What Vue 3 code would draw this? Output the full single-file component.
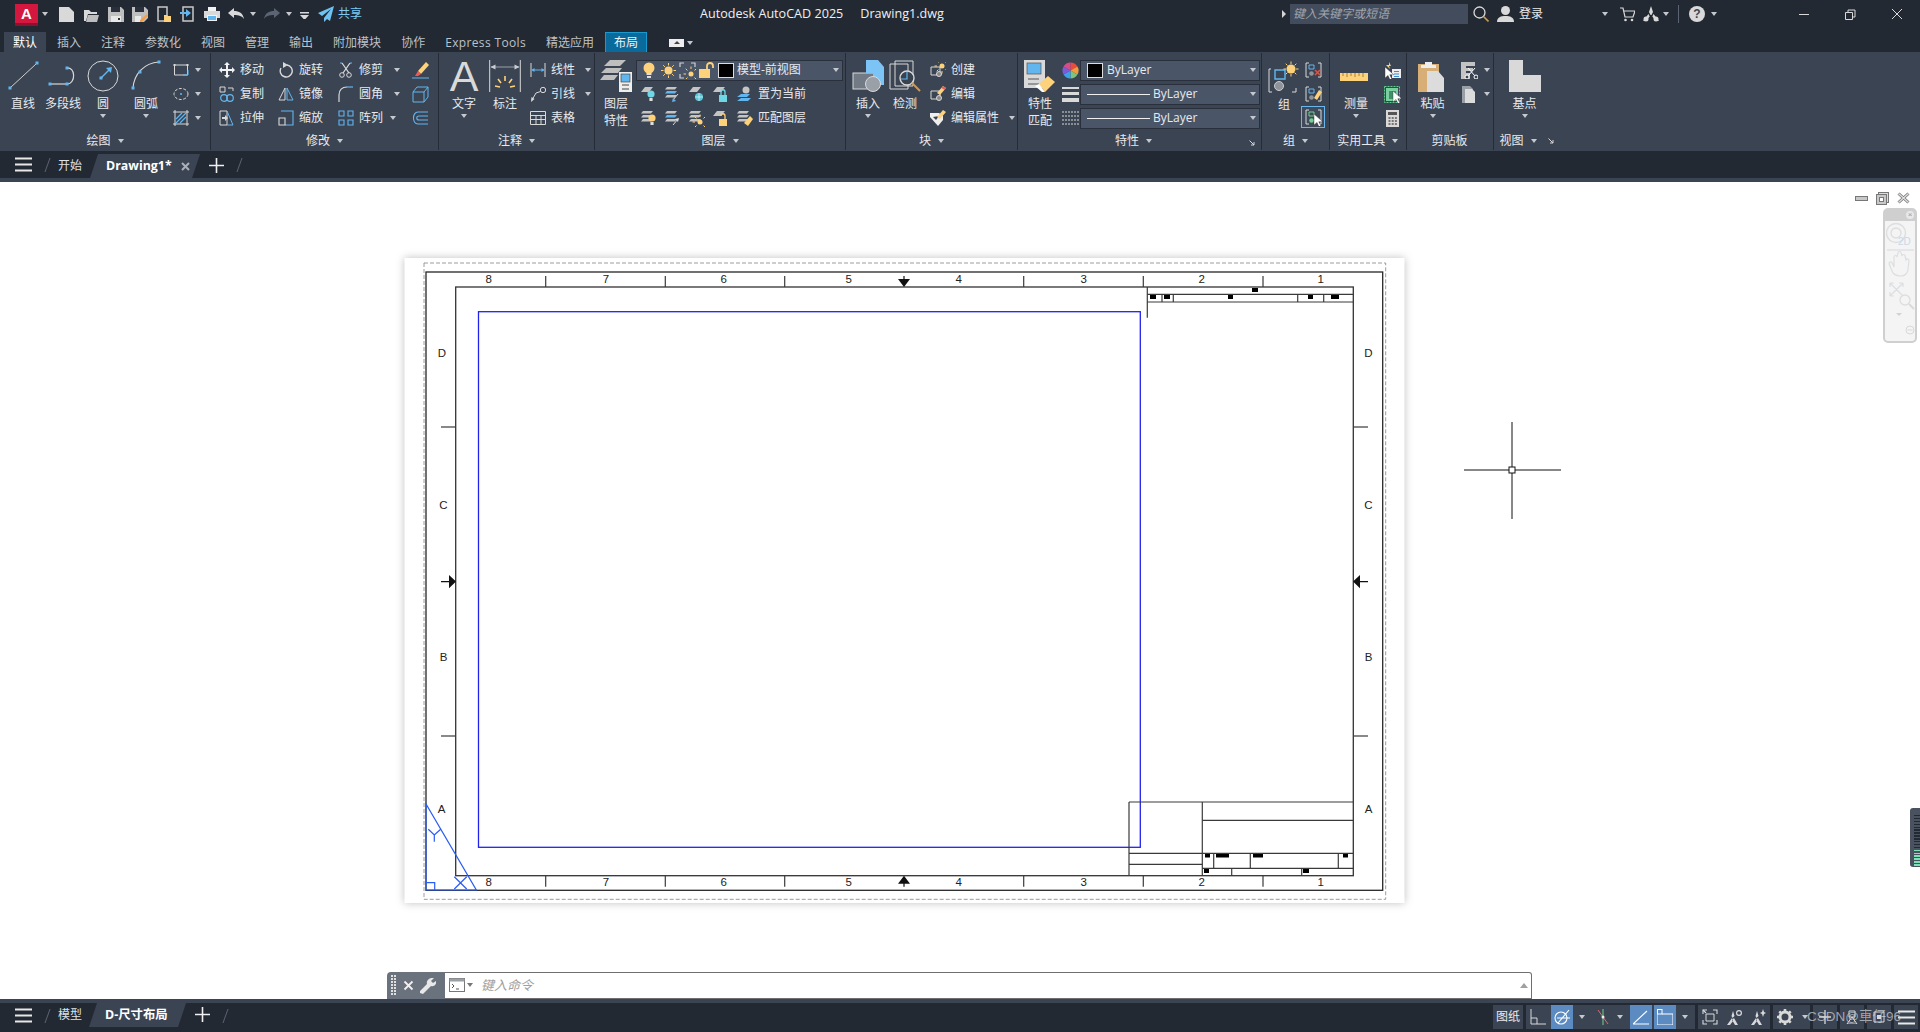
<template>
  <div class="app">
    <header class="titlebar">
      <div class="logo">A</div>
      <i class="caret caret--logo"></i>
      <div class="quick">
        <Ic n="new" w="17" />
        <Ic n="open" w="17" />
        <Ic n="save" w="16" />
        <Ic n="saveas" w="16" />
        <Ic n="publish" w="16" />
        <Ic n="mobile" w="16" />
        <Ic n="print" w="16" />
      </div>
      <Ic n="undo" w="16" class="undo" />
      <i class="caret caret--q1"></i>
      <Ic n="redo" w="16" class="redo" />
      <i class="caret caret--q2"></i>
      <Ic n="custom" w="9" class="custom" />
      <Ic n="share" w="16" class="share" />
      <span class="share-text">共享</span>
      <div class="app-title">
        <span>Autodesk AutoCAD 2025</span>
        <span>Drawing1.dwg</span>
      </div>
      <i class="tri"></i>
      <div class="search">键入关键字或短语</div>
      <Ic n="magnifier" w="16" class="mag" />
      <Ic n="user" w="17" class="user" />
      <span class="login">登录</span>
      <i class="caret caret--login"></i>
      <Ic n="cart" w="15" class="cart" />
      <Ic n="autodesk" w="16" class="adsk" />
      <i class="caret caret--adsk"></i>
      <span class="vsep"></span>
      <div class="help">?</div>
      <i class="caret caret--help"></i>
      <div class="winctl">
        <Ic n="min" w="11" />
        <Ic n="restore" w="11" />
        <Ic n="close" w="12" />
      </div>
    </header>

    <nav class="tabs">
      <span
        v-for="t in tabs"
        :key="t"
        class="tab"
        :class="{ 'tab--on': t === '默认', 'tab--latin': t === 'Express Tools' }"
      >{{ t }}</span>
      <span class="tab tab--ctx">布局</span>
      <span class="view-switch"><i></i></span>
      <i class="caret caret--view"></i>
    </nav>

    <section class="ribbon">
      <div class="panel p-draw">
        <div class="body">
          <div class="big big--40"><Ic n="line" w="33" h="32" /><span>直线</span></div>
          <div class="big big--40"><Ic n="pline" w="33" h="32" /><span>多段线</span></div>
          <div class="big big--40"><Ic n="circle" w="32" /><span>圆</span><i class="caret"></i></div>
          <div class="big big--46"><Ic n="arc" w="32" /><span>圆弧</span><i class="caret"></i></div>
          <div class="col col--draw">
            <div class="row"><Ic n="rect" w="16" /><i class="caret caret--r"></i></div>
            <div class="row"><Ic n="ellipse" w="16" /><i class="caret caret--r"></i></div>
            <div class="row"><Ic n="hatch" w="16" /><i class="caret caret--r"></i></div>
          </div>
        </div>
        <div class="ptitle">绘图<i class="caret"></i></div>
      </div>

      <div class="panel p-modify">
        <div class="body grid-modify">
          <div class="row"><Ic n="move" w="16" /><span>移动</span></div>
          <div class="row"><Ic n="rotate" w="16" /><span>旋转</span></div>
          <div class="row"><Ic n="trim" w="16" /><span>修剪</span><i class="caret caret--t"></i></div>
          <div class="row"><Ic n="pencil" w="17" /></div>
          <div class="row"><Ic n="copy" w="16" /><span>复制</span></div>
          <div class="row"><Ic n="mirror" w="16" /><span>镜像</span></div>
          <div class="row"><Ic n="fillet" w="16" /><span>圆角</span><i class="caret caret--t"></i></div>
          <div class="row"><Ic n="cube" w="17" /></div>
          <div class="row"><Ic n="stretch" w="16" /><span>拉伸</span></div>
          <div class="row"><Ic n="scale" w="16" /><span>缩放</span></div>
          <div class="row"><Ic n="array" w="16" /><span>阵列</span><i class="caret caret--a"></i></div>
          <div class="row"><Ic n="offset" w="17" /></div>
        </div>
        <div class="ptitle">修改<i class="caret"></i></div>
      </div>

      <div class="panel p-annot">
        <div class="body">
          <div class="big big--40"><b class="big-a">A</b><span>文字</span><i class="caret"></i></div>
          <div class="big big--42"><Ic n="dim" w="32" /><span>标注</span></div>
          <div class="col col--annot">
            <div class="row"><Ic n="lineardim" w="16" /><span>线性</span><i class="caret caret--s"></i></div>
            <div class="row"><Ic n="leader" w="16" /><span>引线</span><i class="caret caret--s"></i></div>
            <div class="row"><Ic n="table" w="16" /><span>表格</span></div>
          </div>
        </div>
        <div class="ptitle">注释<i class="caret"></i></div>
      </div>

      <div class="panel p-layer">
        <div class="body">
          <div class="big big--40 two"><Ic n="layers" w="32" /><span>图层<br />特性</span></div>
          <div class="col">
            <div class="row">
              <div class="combo combo--layer">
                <Ic n="bulb" w="17" /><Ic n="sun" w="17" /><Ic n="freeze" w="17" /><Ic n="lock" w="17" />
                <i class="swatch swatch--s"></i>
                <span>模型-前视图</span>
                <i class="caret caret--combo"></i>
              </div>
            </div>
            <div class="row row--l">
              <Ic n="l1" w="17" /><Ic n="l2" w="17" /><Ic n="l3" w="17" /><Ic n="l4" w="17" /><Ic n="l5" w="17" />
              <span>置为当前</span>
            </div>
            <div class="row row--l">
              <Ic n="l6" w="17" /><Ic n="l7" w="17" /><Ic n="l8" w="17" /><Ic n="l9" w="17" /><Ic n="l10" w="17" />
              <span>匹配图层</span>
            </div>
          </div>
        </div>
        <div class="ptitle">图层<i class="caret"></i></div>
      </div>

      <div class="panel p-block">
        <div class="body">
          <div class="big big--36"><Ic n="insert" w="32" /><span>插入</span><i class="caret"></i></div>
          <div class="big big--38"><Ic n="detect" w="32" /><span>检测</span></div>
          <div class="col col--block">
            <div class="row"><Ic n="bcreate" w="16" /><span>创建</span></div>
            <div class="row"><Ic n="bedit" w="16" /><span>编辑</span></div>
            <div class="row"><Ic n="battr" w="16" /><span>编辑属性</span><i class="caret caret--e"></i></div>
          </div>
        </div>
        <div class="ptitle">块<i class="caret"></i></div>
      </div>

      <div class="panel p-props">
        <div class="body">
          <div class="big big--40 two"><Ic n="match" w="32" /><span>特性<br />匹配</span></div>
          <div class="col col--pi">
            <div class="row"><Ic n="wheel" w="17" /></div>
            <div class="row"><Ic n="lweight" w="17" /></div>
            <div class="row"><Ic n="ltype" w="17" /></div>
          </div>
          <div class="col col--pc">
            <div class="row"><div class="combo combo--prop"><i class="swatch"></i><span>ByLayer</span><i class="caret caret--combo"></i></div></div>
            <div class="row"><div class="combo combo--prop"><i class="lsample"></i><span>ByLayer</span><i class="caret caret--combo"></i></div></div>
            <div class="row"><div class="combo combo--prop"><i class="lsample"></i><span>ByLayer</span><i class="caret caret--combo"></i></div></div>
          </div>
        </div>
        <div class="ptitle ptitle--launch">特性<i class="caret"></i><Ic n="launch" w="6" class="launch" /></div>
      </div>

      <div class="panel p-group">
        <div class="body">
          <div class="big big--36"><Ic n="group" w="33" /><span>组</span></div>
          <div class="col col--group">
            <div class="row"><Ic n="g1" w="17" /></div>
            <div class="row"><Ic n="g2" w="17" /></div>
            <div class="row row--sel"><Ic n="g3" w="17" /></div>
          </div>
        </div>
        <div class="ptitle">组<i class="caret"></i></div>
      </div>

      <div class="panel p-util">
        <div class="body">
          <div class="big big--40"><Ic n="ruler" w="32" /><span>测量</span><i class="caret"></i></div>
          <div class="col col--util">
            <div class="row"><Ic n="u1" w="17" /></div>
            <div class="row"><Ic n="u2" w="17" /></div>
            <div class="row"><Ic n="calc" w="17" /></div>
          </div>
        </div>
        <div class="ptitle">实用工具<i class="caret"></i></div>
      </div>

      <div class="panel p-clip">
        <div class="body">
          <div class="big big--40"><Ic n="paste" w="32" /><span>粘贴</span><i class="caret"></i></div>
          <div class="col col--clip">
            <div class="row"><Ic n="cut" w="17" /><i class="caret caret--c"></i></div>
            <div class="row"><Ic n="dup" w="17" /><i class="caret caret--c"></i></div>
          </div>
        </div>
        <div class="ptitle">剪贴板</div>
      </div>

      <div class="panel p-view">
        <div class="body">
          <div class="big big--40"><Ic n="base" w="32" /><span>基点</span><i class="caret"></i></div>
        </div>
        <div class="ptitle ptitle--left">视图<i class="caret"></i><Ic n="launch" w="6" class="launch" /></div>
      </div>
    </section>

    <div class="doctabs">
      <Ic n="burger" w="17" class="burger" />
      <i class="slash"></i>
      <span class="doc-plain">开始</span>
      <div class="doc-on doc-on--file">
        <b>Drawing1*</b>
        <Ic n="docx" w="9" />
      </div>
      <Ic n="plus" w="15" />
      <i class="slash"></i>
    </div>
    <div class="strip"></div>

    <main class="canvas">
      <svg class="sheet" width="1920" height="817" viewBox="0 182 1920 817">
        <rect class="paper" x="404.5" y="258" width="1000" height="645" />
        <rect x="424" y="263" width="961.7" height="636.3" fill="none" stroke="#9c9c9c" stroke-dasharray="4 2" />
        <rect x="426" y="272" width="956.7" height="618.3" fill="none" stroke="#262626" stroke-width="1.3" />
        <rect x="455.7" y="287" width="897.6" height="588.7" fill="none" stroke="#333" stroke-width="1.3" />
        <rect x="478.5" y="311.7" width="661.8" height="535.6" fill="none" stroke="#2222ee" stroke-width="1.3" />

        <g stroke="#3a3a3a" stroke-width="1.2">
          <line v-for="x in ticks" :key="'t' + x" :x1="x" :x2="x" y1="276" y2="287" />
          <line v-for="x in ticks" :key="'b' + x" :x1="x" :x2="x" y1="875.7" y2="886.7" />
          <line v-for="y in sideTicks" :key="'l' + y" x1="441" x2="455.7" :y1="y" :y2="y" />
          <line v-for="y in sideTicks" :key="'r' + y" x1="1353.3" x2="1368" :y1="y" :y2="y" />
          <line v-for="(l, i) in blockLines" :key="'k' + i" :x1="l[0]" :y1="l[1]" :x2="l[2]" :y2="l[3]" />
        </g>
        <rect v-for="(r, i) in blockMarks" :key="'m' + i" :x="r[0]" :y="r[1]" :width="r[2]" :height="r[3]" fill="#000" />

        <g fill="#111" stroke="none">
          <path d="M903.4 276h1.2v3H910l-6 8-6-8h5.4z" />
          <path d="M903.4 886.7h1.2v-3H910l-6-8-6 8h5.4z" />
          <path d="M441 581h8v-6l7 6.6-7 6.6v-6h-8z" />
          <path d="M1368 581h-8v-6l-7 6.6 7 6.6v-6h8z" />
        </g>

        <g class="zone">
          <text v-for="n in numbers" :key="'nt' + n.t" :x="n.x" y="283" text-anchor="middle">{{ n.t }}</text>
          <text v-for="n in numbers" :key="'nb' + n.t" :x="n.x" y="886" text-anchor="middle">{{ n.t }}</text>
          <text v-for="z in zones" :key="'zl' + z.t" :x="z.x" :y="z.y" text-anchor="middle">{{ z.t }}</text>
          <text v-for="z in zones" :key="'zr' + z.t" x="1368.5" :y="z.y" text-anchor="middle">{{ z.t }}</text>
        </g>

        <g fill="none" stroke="#2a5cf5" stroke-width="1.2">
          <path d="M426 804V890H476.3Z" />
          <path d="M426 882.7h8.7V890" />
          <path d="M428.3 829.3l6 5.7 6.4-5.7M434.3 835v6.7" />
          <path d="M454.3 876.7l12.4 12.3M466.7 876.7l-12.4 12.3" />
        </g>

        <g stroke="#111" fill="none">
          <path d="M1512 422V467M1512 473V519M1464 470H1509M1515 470H1561" />
          <rect x="1509" y="467" width="6" height="6" />
        </g>
      </svg>

      <div class="vp-ctl">
        <Ic n="vmin" w="13" />
        <Ic n="vrestore" w="13" />
        <Ic n="vclose" w="13" />
      </div>

      <div class="navbar">
        <div class="navbar__head"><i>×</i></div>
        <Ic n="nav" w="30" h="119" />
      </div>

      <div class="edge-tab">
        <i v-for="n in 12" :key="n" class="edge-tab__off"></i>
        <i v-for="n in 6" :key="'g' + n" class="edge-tab__on"></i>
      </div>

      <div class="cmd">
        <div class="cmd__tools">
          <Ic n="grip" w="6" h="22" />
          <Ic n="cmdx" w="11" />
          <Ic n="wrench" w="16" />
        </div>
        <div class="cmd__input">
          <Ic n="term" w="16" h="14" />
          <i class="caret caret--cmd"></i>
          <span>键入命令</span>
          <i class="caret-up"></i>
        </div>
      </div>
    </main>

    <footer class="statusbar">
      <div class="strip"></div>
      <div class="status-row">
        <Ic n="burger" w="17" class="burger" />
        <i class="slash"></i>
        <span class="doc-plain">模型</span>
        <div class="doc-on doc-on--layout"><b>D-尺寸布局</b></div>
        <Ic n="plus" w="15" />
        <i class="slash"></i>

        <div class="sbtns">
          <div class="sgroup sgroup--paper">图纸</div>
          <div class="sgroup sgroup--a">
            <Ic n="ortho" w="16" />
            <div class="sb-on sb-on--polar"><Ic n="polar" w="16" /></div>
            <i class="caret caret--st"></i>
            <Ic n="osnap" w="16" class="osnap" />
            <i class="caret caret--st"></i>
            <div class="sb-on"><Ic n="angle" w="16" /></div>
            <div class="sb-on sb-on--gap"><Ic n="snapbox" w="16" /></div>
            <i class="caret caret--st"></i>
          </div>
          <div class="sgroup sgroup--b">
            <Ic n="zoomfit" w="16" /><Ic n="anno1" w="16" /><Ic n="anno2" w="16" />
          </div>
          <div class="sgroup sgroup--c"><Ic n="gear" w="16" /><i class="caret caret--st"></i></div>
          <div class="sgroup sgroup--d"><Ic n="cross" w="14" /></div>
          <div class="sgroup sgroup--d"><Ic n="person" w="14" /></div>
          <div class="sgroup sgroup--d"><Ic n="frame" w="14" /></div>
          <div class="sgroup sgroup--d"><Ic n="burger" w="17" /></div>
          <span class="watermark">CSDN@車仔96</span>
        </div>
      </div>
    </footer>
  </div>
</template>

<script setup>
import { h } from 'vue';

const W = '#d9d9d9';
const B = '#62b6f0';
const Y = '#fdd27a';

const sq = (x, y, c = B, s = 3) => `<rect x="${x - s / 2}" y="${y - s / 2}" width="${s}" height="${s}" fill="${c}"/>`;
const st = (d, c = W, sw = 1.2) => `<path d="${d}" fill="none" stroke="${c}" stroke-width="${sw}"/>`;
const fl = (d, c = W) => `<path d="${d}" fill="${c}"/>`;
const plate = (y = 0, c = '#c4c4c4') => fl(`M5 ${y + 1}h8l-4 5H1z`, c);
const strip = (y, c) => fl(`M3 ${y}h10l-2 2.6H1z`, c);
const stack = strip(1, '#c4c4c4') + strip(5, '#c4c4c4') + strip(9, '#c4c4c4');
const blueStack = strip(1, '#c4c4c4') + strip(5, B) + strip(9, '#c4c4c4');
const bulb = (c, x = 8, y = 6) => `<circle cx="${x}" cy="${y}" r="3.6" fill="${c}"/><rect x="${x - 1.6}" y="${y + 4}" width="3.2" height="3" fill="#ddd"/>`;
const sunRays = (x, y, c) => {
  let out = '';
  for (let i = 0; i < 8; i++) {
    const a = (i * Math.PI) / 4;
    out += `<line x1="${x + Math.cos(a) * 5}" y1="${y + Math.sin(a) * 5}" x2="${x + Math.cos(a) * 7.5}" y2="${y + Math.sin(a) * 7.5}" stroke="${c}"/>`;
  }
  return out;
};
const wedge = (i, c) => {
  const p = (a) => `${8.5 + 8 * Math.cos(a)} ${8.5 + 8 * Math.sin(a)}`;
  const a0 = ((i * 60 - 90) * Math.PI) / 180;
  const a1 = (((i + 1) * 60 - 90) * Math.PI) / 180;
  return `<path d="M8.5 8.5L${p(a0)}A8 8 0 0 1 ${p(a1)}Z" fill="${c}"/>`;
};
const cursor = (x, y, s = 1) => `<path transform="translate(${x} ${y}) scale(${s})" d="M0 0v11l3-2.6 2 4.4 1.8-.8-2-4.3h4z" fill="#fff" stroke="#333" stroke-width=".4"/>`;
const brackets = st('M4 1H1V15H4M13 1h3V15h-3', W, 1);

const icons = {
  new: fl('M1 1h10l5 5v10H1z'),
  open: fl('M1 4h5l2 2h6v2H5l-2 7H1z', W) + fl('M5 9h11l-2 7H3z', '#bdbdbd'),
  save: fl('M0 1h13l3 3v12H0z', '#bfbfbf') + fl('M3 1h9v5H3z', '#2a303b') + fl('M3 10h10v6H3z', '#e8e8e8') + fl('M10 12h2v2h-2z', '#333'),
  saveas: fl('M0 1h13l3 3v8l-4 4H0z', '#bfbfbf') + fl('M3 1h9v5H3z', '#2a303b') + fl('M3 10h6v6H3z', '#e8e8e8') + fl('M15 8l1 2-6 6-2 0 0-2z', '#f0a050'),
  publish: st('M2 1h9v14H2z', '#c8c8c8', 1.5) + fl('M8 9h3l1 1h3v6H8z', Y),
  mobile: st('M3 1h10v14H3z', '#c8c8c8', 1.5) + fl('M0 6h6V3l5 4-5 4V8H0z', B),
  print: fl('M4 1h8v4H4z', '#f2f2f2') + fl('M0 5h16v7H0z', W) + fl('M3 9h10v6H3z', '#f2f2f2') + fl('M4 10h8v4H4z', B),
  undo: fl('M0 7l6-5v3c5 0 9 2 10 8-2-3-5-4-10-4v3z', W),
  redo: fl('M16 7l-6-5v3C5 5 1 7 0 13c2-3 5-4 10-4v3z', '#5b6472'),
  custom: fl('M0 2h9v1.5H0zM0 5h9L4.5 10z', W),
  share: fl('M16 0L0 7l4 3 9-7-7 9v4l3-3 3 2z', '#6fc3f2'),
  magnifier: `<circle cx="6.5" cy="6.5" r="5.5" fill="none" stroke="${W}" stroke-width="1.3"/>` + st('M10.5 10.5l5 5', '#c79b5f', 1.6),
  user: `<circle cx="8.5" cy="4.5" r="4.5" fill="${W}"/>` + fl('M0 16c0-5 4-6 8.5-6s8.5 1 8.5 6z'),
  cart: st('M0 1h3l2 9h8l2-6H4', W, 1.2) + `<circle cx="5.5" cy="13" r="1.3" fill="${W}"/><circle cx="12" cy="13" r="1.3" fill="${W}"/>`,
  autodesk: fl('M8 0l2 6-1.5 3H7.5L6 6z') + fl('M5.5 8l1.2 2.5L3 15H0z') + fl('M10.5 8l-1.2 2.5 3.7 4.5h3z') + `<circle cx="3" cy="13" r="2.5" fill="${W}"/><circle cx="13" cy="13" r="2.5" fill="${W}"/>`,
  min: st('M0 5.5h10', W, 1),
  restore: st('M.5 3.5h7v7h-7zM3 3.5V1h7v7H8', W, 1),
  close: st('M1 1l10 10M11 1L1 11', W, 1),

  line: st('M3 28L29 4', '#cfcfcf', 1) + sq(3, 28) + sq(30, 3),
  pline: st('M4 24H20', W) + st('M19 8c10-2 10 16 1 16', W) + sq(3, 24) + sq(20, 24) + sq(20, 8),
  circle: `<circle cx="16" cy="16" r="15" fill="none" stroke="${W}"/>` + st('M14 18L23 9', B, 1.4) + fl('M25 7l-1 6-5-5z', B) + sq(14, 18),
  arc: st('M3 28C4 14 14 3 29 2', W, 1.1) + sq(3, 28) + sq(10, 12) + sq(29, 2),
  rect: st('M1.5 3h13v10h-13z', W, 1) + sq(1.5, 3, W, 2) + sq(14.5, 3, W, 2) + st('M10 13h5V8', B, 1),
  ellipse: `<ellipse cx="8" cy="8" rx="7" ry="5.5" fill="none" stroke="${W}" stroke-dasharray="3 1.5"/><circle cx="8" cy="8" r="1" fill="${B}"/>`,
  hatch: st('M2 0v16M14 0v16M0 2h16M0 14h16', W, 1) + st('M3 9L9 3M3 13L13 3M7 13l6-6', B, 1.2),
  move: fl('M8 0l3 3H9v4h4V5l3 3-3 3V9H9v4h2l-3 3-3-3h2V9H3v2L0 8l3-3v2h4V3H5z', '#f2f2f2'),
  rotate: st('M9 3a6 6 0 1 1-6 3', W, 1.4) + fl('M5 0l5 3-5 3z', W),
  trim: st('M3 0v2M13 0v2', B, 1) + st('M4 1l7 10M12 1L5 11', W, 1.3) + `<circle cx="4" cy="13" r="2.3" fill="none" stroke="${W}"/><circle cx="11" cy="13" r="2.3" fill="none" stroke="${W}"/>`,
  pencil: fl('M14 0l3 3-8 9-3-3z', Y) + fl('M6 9l3 3-3 2H3z', '#e85c5c') + st('M0 16h17', B, 1),
  copy: st('M1 1h5v5H1z', W, 1) + st('M9 2h5v3', W, 1) + `<circle cx="5" cy="12" r="3.3" fill="none" stroke="${B}" stroke-width="1.2"/><circle cx="11" cy="12" r="3.3" fill="none" stroke="${B}" stroke-width="1.2"/>`,
  mirror: st('M7 2L1 14h6z', W, 1) + st('M9 2l6 12H9z', B, 1),
  fillet: st('M1 16V9C1 4 4 1 9 1', W, 1.2) + st('M9 1h6', B, 1.2),
  cube: st('M1 6h11v10H1z', B, 1) + st('M1 6l4-5h11v10l-4 5M12 6l4-5', B, 1),
  stretch: st('M1 1h7v14H1z', W, 1) + st('M8 1l6 14H8', B, 1) + fl('M3 7h3V5l3 3-3 3V9H3z', W),
  scale: st('M3 1h12v14H7', B, 1.1) + st('M1 8h6v7H1z', W, 1.1),
  array: st('M1 1h5v5H1zM10 1h5v5h-5zM1 10h5v5H1zM10 10h5v5h-5z', B, 1.1),
  offset: st('M16 2H6C0 2 0 14 6 14h10M16 6H7C4 6 4 10 7 10h9', B, 1.1),
  dim: st('M.7 0V32M31.3 0V32', W, 1) + st('M2 7H30', '#9aa0a8', 1) + fl('M1.5 7l5-2.5v5zM30.5 7l-5-2.5v5z', '#c9ccd0') + st('M16 16v5M9 19l3 4M23 19l-3 4M6 26l5 1M26 26l-5 1', Y, 1.6),
  lineardim: st('M1 1v14M15 1v14', W, 1) + st('M2 8h12', B, 1) + fl('M1.5 8l3-2v4zM14.5 8l-3-2v4z', B),
  leader: `<circle cx="13" cy="4" r="2.7" fill="none" stroke="${W}"/>` + st('M10.5 5.5L6 7 2 14', W, 1) + fl('M1 16l.5-5 3 2z', W),
  table: st('M.5 1.5h15v13H.5zM.5 5.5h15M.5 9.5h15M6 5.5v9M11 5.5v9', W, 1),
  layers: fl('M10 0h16l-6 6H4z', '#bfbfbf') + fl('M6 8h16l-4 5H1z', '#bfbfbf') + fl('M4 15h14l-4 5H0z', '#bfbfbf') + `<rect x="19" y="12" width="13" height="20" fill="#eee"/><rect x="21" y="14" width="9" height="8" fill="${B}" stroke="#333" stroke-width=".6"/>` + st('M22 25h7M29 29h-7', '#444', 1),
  bulb: `<circle cx="8" cy="6" r="5.5" fill="${Y}"/><rect x="5.5" y="11" width="5" height="2" fill="#ddd"/><rect x="6" y="14" width="4" height="2" fill="#ddd"/>`,
  sun: `<circle cx="8.5" cy="8.5" r="4" fill="${Y}"/>` + sunRays(8.5, 8.5, Y),
  freeze: st('M5 1H1v4M12 1h4v4M1 12v4h4', '#cfd3d8', 1.2) + `<circle cx="12" cy="12" r="2.5" fill="${Y}"/>` + sunRays(12, 12, Y),
  lock: `<rect x="1" y="7" width="11" height="9" fill="${Y}"/>` + st('M9 7V4c0-4 6-4 6 0v2', Y, 1.8),
  l1: plate() + bulb('#6fd6e6', 11, 8),
  l2: blueStack + st('M14 8l-5 6', W, 1) + fl('M8 16l1-4 3 3z', B),
  l3: plate() + `<circle cx="11" cy="11" r="4" fill="#56c6d8"/>` + st('M7 11h8M11 7v8', '#fff', .6),
  l4: plate() + `<rect x="7" y="9" width="8" height="7" fill="#6fd6e6"/>` + st('M9 9V6c0-3 4-3 4 0v3', '#6fd6e6', 1.3),
  l5: `<circle cx="10" cy="4" r="3.5" fill="#c4c4c4"/>` + fl('M5 8h9l-3 3H1z', B) + fl('M5 12h10l-3 3H1z', B),
  l6: stack + bulb(Y, 12, 8),
  l7: blueStack + st('M9 15l5-6', W, 1) + fl('M15 8l-1 4-3-3z', W),
  l8: stack + `<circle cx="12" cy="12" r="2.5" fill="${Y}"/>` + sunRays(12, 12, Y),
  l9: plate() + `<rect x="7" y="9" width="8" height="7" fill="${Y}"/>` + st('M13 9V6c0-3-4-3-4 0', Y, 1.3),
  l10: stack + fl('M14 6l3 3-5 7-4-3z', Y),
  insert: `<rect x="1" y="13" width="23" height="16" fill="#727a86" stroke="${W}"/>` + fl('M14 0h12l6 7v18H21V13H14z', '#7cc4f5') + `<circle cx="21" cy="24" r="7.5" fill="#9aa0a8" stroke="${W}"/>`,
  detect: st('M6 1h18v25H6zM1 4h18v25H1z', W, 1) + `<circle cx="18" cy="18" r="7" fill="#39424f" stroke="${W}" stroke-width="1.4"/>` + st('M18 12v7h-6', B, 1.2) + st('M23 23l8 8', '#c79b5f', 2),
  bcreate: st('M1 5h9v8H1z', W, 1) + `<circle cx="9" cy="12" r="2.5" fill="#888" stroke="${W}"/><circle cx="12" cy="4" r="2.5" fill="${Y}"/>` + sunRays(12, 4, Y),
  bedit: st('M1 5h9v8H1z', W, 1) + `<circle cx="9" cy="12" r="2.5" fill="#888" stroke="${W}"/>` + fl('M13 0l3 2-6 7-3-2z', Y) + fl('M13 0l3 2-1.5 2-3-2z', '#e85c5c'),
  battr: fl('M0 3h9l4 3v4l-5 6-8-9z', '#eee') + fl('M3 7l3 3 3-4', '#39424f') + fl('M13 0l3 2-6 7-3-2z', Y),
  match: `<rect x="0" y="0" width="21" height="28" fill="${W}"/><rect x="3" y="3" width="14" height="11" fill="${B}" stroke="#555" stroke-width=".7"/>` + st('M4 19h11M4 24h11', '#555', 1.2) + fl('M15 24l9-8 7 6-10 10z', Y) + fl('M15 24l6 8-3 0-7-6z', '#fff'),
  wheel: ['#e84c3d', '#f39c3d', '#7cc47f', '#3da1e8', '#7a5cd6', '#d64c8a'].map((c, i) => wedge(i, c)).join(''),
  lweight: fl('M0 1h17v2H0z') + fl('M0 6h17v3H0z') + fl('M0 12h17v4H0z'),
  ltype: st('M0 2h17M0 6h17M0 10h17M0 14h17', W, 1).replace('/>', ' stroke-dasharray="2 1"/>'),
  launch: st('M.5 .5L5 5M5 2v3H2', W, 1),
  group: st('M3 9H1V32H4M28 28v4h-4', W, 1) + st('M7 10h10v9H7z', B, 1.4) + `<circle cx="11" cy="26" r="4.5" fill="#8f949b" stroke="#ccc"/><circle cx="23" cy="9" r="4.5" fill="${Y}"/>` + sunRays(23, 9, Y),
  g1: brackets + st('M4 3h5v4H4z', B, 1) + `<circle cx="6.5" cy="11.5" r="2.3" fill="#8f949b"/>` + st('M10 8l5 5M15 8l-5 5', '#e84c3d', 1.6),
  g2: brackets + st('M4 3h5v4H4z', B, 1) + `<circle cx="6.5" cy="11.5" r="2.3" fill="#8f949b"/>` + fl('M14 4l3 2-5 8-3-2z', Y),
  g3: brackets + st('M4 3h5v4H4z', '#6fd08c', 1) + `<circle cx="6.5" cy="11.5" r="2.3" fill="#6fd08c"/>` + cursor(9, 5),
  ruler: fl('M0 13h28v8H0z', Y) + st('M3 13v3M7 13v4M11 13v3M15 13v4M19 13v3M23 13v4', '#8a6a2e', .8),
  u1: fl('M5 0l2 4h-2l1 3-4-4h3z', Y) + `<rect x="8" y="7" width="9" height="9" fill="#eee"/>` + st('M10 9.5h5M10 12h5M10 14.5h5', '#3d8bd0', 1) + cursor(1, 5),
  u2: `<rect x="2" y="2" width="12" height="13" fill="#7ad0a0"/><rect x="0.5" y="0.5" width="15" height="16" fill="none" stroke="#5bd08a" stroke-dasharray="2 1"/><rect x="5" y="5" width="7" height="8" fill="#3f8f68"/>` + cursor(9, 5),
  calc: `<rect x="2" y="0" width="13" height="17" fill="${W}"/><rect x="4" y="2" width="9" height="3" fill="#555"/>` + st('M4.5 8h2M7.7 8h2M10.9 8h2M4.5 11h2M7.7 11h2M10.9 11h2M4.5 14h2M7.7 14h2M10.9 14h2', '#555', 1.5),
  paste: fl('M1 4h21v20h-7V32H1z', '#d6ae76') + fl('M8 2h7v3h4v3H4V5h4z', '#eee') + fl('M10 11h11l6 7v14H10z', '#dcdcdc'),
  cut: fl('M0 0h14v4H5v2h7v3H5v2h4v6H0z', '#c4c4c4') + st('M7 6l7 8M14 6l-7 8', '#fff', 1) + `<circle cx="6" cy="15" r="2" fill="#39424f" stroke="#fff"/><circle cx="15" cy="15" r="2" fill="#39424f" stroke="#fff"/>`,
  dup: fl('M1 0h8l3 3v14H1z', '#9a9ea5') + fl('M4 3h7l3 3v11H4z', '#dcdcdc'),
  base: fl('M0 0h14v15h18v17H0z', '#d9d9d9'),

  burger: st('M0 2.5h17M0 8.5h17M0 14.5h17', '#e8e8e8', 2),
  docx: st('M1 1l7 7M8 1L1 8', '#aab0b8', 2),
  plus: st('M7.5 0v15M0 7.5h15', '#f0f0f0', 1.6),

  vmin: `<rect x="0.5" y="4.5" width="12" height="4" fill="#c8c8c8" stroke="#777"/>`,
  vrestore: `<rect x="2.5" y="0.5" width="10" height="10" fill="#ddd" stroke="#777"/><rect x="0.5" y="2.5" width="10" height="10" fill="#c8c8c8" stroke="#777"/><rect x="3.5" y="5.5" width="4" height="4" fill="#fff" stroke="#777"/>`,
  vclose: st('M1.5 1.5l10 9M11.5 1.5l-10 9', '#777', 3) + st('M1.5 1.5l10 9M11.5 1.5l-10 9', '#ddd', 1.4),
  nav: `<circle cx="10" cy="12" r="9.5" fill="none" stroke="#dcdee0" stroke-width="1.4"/><circle cx="10" cy="12" r="5" fill="none" stroke="#dcdee0" stroke-width="1.4"/><text x="12" y="24" font-size="10" font-family="Liberation Sans, sans-serif" fill="#c8d8ea">2D</text>` +
    st('M1 29H28', '#d6d8da', 1) +
    `<g transform="translate(1 2)">` + st('M6 50c-3-7-5-10-3-11s3 3 4 5l0-10c0-2 3-2 3 0l1-4c0-2 3-2 3 0l1 3c0-2 3-2 3 0l1 4c1-2 3-1 3 1l-1 8c0 4-3 7-7 7s-6-1-8-3z', '#dcdee0', 1.2) + `</g>` +
    `<g transform="translate(1 1)">` + st('M3 61L16 74M16 61L3 74M3 61h4M3 61v4M16 61h-4M16 61v4M3 74h4M3 74v-4', '#dcdee0', 1.2) +
    `<circle cx="18" cy="78" r="5" fill="#f4f4f4" stroke="#dcdee0" stroke-width="1.4"/>` + st('M22 82l5 5', '#d8dadc', 2) + `</g>` +
    fl('M10 92h6l-3 3z', '#d0d2d4') +
    `<circle cx="24" cy="109" r="4" fill="none" stroke="#d6d8da"/>` + st('M21.5 109h5', '#d6d8da', 1),
  grip: [0, 1, 2, 3, 4, 5, 6].map((r) => `<rect x="0" y="${r * 3}" width="2" height="2" fill="#e0e0e0"/><rect x="3" y="${r * 3}" width="2" height="2" fill="#e0e0e0"/>`).join(''),
  cmdx: st('M1.5 1.5l8 8M9.5 1.5l-8 8', '#f0f0f0', 1.8),
  wrench: fl('M14 0l-3 3 2 2 3-2c1 3-2 6-5 5L3 16l-3-1v-2l7-7c-1-3 2-6 5-6z', '#e8e8e8'),
  term: `<rect x=".5" y=".5" width="15" height="13" fill="#fff" stroke="#777"/><rect x=".5" y=".5" width="15" height="3" fill="#9a9ea5"/>` + st('M3 6l2 2-2 2M7 11h3', '#555', 1),

  ortho: st('M1 0V15H16M1 9h6v6', W, 1),
  polar: `<circle cx="7" cy="9" r="6" fill="none" stroke="#fff" stroke-width="1.1"/>` + st('M3 9h13M4 14L15 1', '#fff', 1.1),
  osnap: st('M3 1l10 14', '#e06a6a', 1) + st('M8 0v16', '#6fd08c', 1) + `<circle cx="8" cy="8" r="1.5" fill="#eee"/>`,
  angle: st('M0 15h16M0 15L14 2', '#fff', 1.1),
  snapbox: st('M5 5h11v11H0V5', '#fff', 1.1) + `<rect x=".5" y=".5" width="4.5" height="4.5" fill="#5b8bc0" stroke="#fff"/>`,
  zoomfit: st('M1 5V1h4M11 1h4v4M15 11v4h-4M5 15H1v-4', W, 1.1) + st('M4 5h8v7H4z', W, 1) + st('M1 1l3 3', W, 1.1),
  anno1: fl('M7 2l1.5 5-2 2-1-2zM6 9l-5 7h3l3-4zM8 9l4 7h-3l-3-5z', W) + `<circle cx="13" cy="4" r="2.4" fill="none" stroke="${W}" stroke-width="1.2"/>`,
  anno2: fl('M7 2l1.5 5-2 2-1-2zM6 9l-5 7h3l3-4zM8 9l4 7h-3l-3-5z', W) + fl('M13 0l1 3 2 1-2 1-1 3-1-3-2-1 2-1z', W),
  gear: `<circle cx="8" cy="8" r="5" fill="none" stroke="${W}" stroke-width="3"/>` + st('M8 0v3M8 13v3M0 8h3M13 8h3M2.3 2.3l2 2M11.7 11.7l2 2M13.7 2.3l-2 2M4.3 11.7l-2 2', W, 2.6),
  cross: st('M7 0v14M1 7h12', W, 1.3),
  person: st('M4 1h6v6H4zM7 7l-5 7h10z', W, 1),
  frame: st('M2 2h10v10H2z', W, 1) + fl('M5 5h4v4H5z', W)
};

const Ic = (p) => {
  const w = Number(p.w);
  const ht = Number(p.h || p.w);
  return h('svg', { class: 'ic', width: w, height: ht, viewBox: `0 0 ${w} ${ht}`, innerHTML: icons[p.n] });
};
Ic.props = ['n', 'w', 'h'];

const tabs = ['默认', '插入', '注释', '参数化', '视图', '管理', '输出', '附加模块', '协作', 'Express Tools', '精选应用'];

const ticks = [545.7, 665.3, 784.7, 1023.7, 1143.3, 1263];
const sideTicks = [427, 736];
const numbers = [
  { t: '8', x: 488.7 },
  { t: '7', x: 606 },
  { t: '6', x: 723.7 },
  { t: '5', x: 848.7 },
  { t: '4', x: 958.7 },
  { t: '3', x: 1083.6 },
  { t: '2', x: 1201.7 },
  { t: '1', x: 1320.7 }
];
const zones = [
  { t: 'D', x: 442, y: 357 },
  { t: 'C', x: 443.5, y: 509 },
  { t: 'B', x: 443.5, y: 661 },
  { t: 'A', x: 441.5, y: 813 }
];
const blockLines = [
  [1147.3, 287, 1147.3, 317.7],
  [1147.3, 294.3, 1353.3, 294.3],
  [1147.3, 302, 1353.3, 302],
  [1162, 294.3, 1162, 302],
  [1173.3, 294.3, 1173.3, 302],
  [1297.7, 294.3, 1297.7, 302],
  [1323.7, 294.3, 1323.7, 302],
  [1129, 802, 1353.3, 802],
  [1129, 802, 1129, 875.7],
  [1202.3, 802, 1202.3, 875.7],
  [1202.3, 820.3, 1353.3, 820.3],
  [1129, 853.3, 1353.3, 853.3],
  [1129, 864.3, 1202.3, 864.3],
  [1202.3, 868.3, 1353.3, 868.3],
  [1213.7, 853.3, 1213.7, 868.3],
  [1250.3, 853.3, 1250.3, 868.3],
  [1338.3, 853.3, 1338.3, 868.3],
  [1231.7, 868.3, 1231.7, 875.7],
  [1301.7, 868.3, 1301.7, 875.7]
];
const blockMarks = [
  [1252, 288, 6, 4],
  [1150, 295, 6, 4],
  [1164, 295, 6, 4],
  [1228, 295, 5, 4],
  [1308, 295, 5, 4],
  [1331, 295, 8, 4],
  [1205, 854, 5, 3.5],
  [1216, 854, 13, 3.5],
  [1253, 854, 10, 3.5],
  [1343, 854, 5, 3.5],
  [1204, 869, 5, 4],
  [1303, 869, 6, 4]
];
</script>

<style>
html,
body {
  margin: 0;
  background: #fff;
}
</style>

<style scoped>
.app {
  width: 1920px;
  height: 1032px;
  display: flex;
  flex-direction: column;
  overflow: hidden;
  font: 12px/16px "Open Sans", "Noto Sans CJK SC", sans-serif;
  color: #e8eaed;
  background: #222933;
}

.ic {
  display: block;
  flex: none;
}

/* carets */
.caret {
  display: block;
  flex: none;
  width: 0;
  height: 0;
  border-top: 4px solid #c5c9cf;
  border-left: 3.5px solid transparent;
  border-right: 3.5px solid transparent;
}

/* title bar */
.titlebar {
  height: 32px;
  flex: none;
  box-sizing: border-box;
  display: flex;
  align-items: center;
  padding: 0 0 4px 15px;
}

.logo {
  width: 23px;
  height: 19px;
  margin-top: 1px;
  background: #d4173f;
  border-bottom: 3px solid #8c1230;
  color: #fff;
  font: 700 15px/19px "Liberation Sans", sans-serif;
  text-align: center;
}

.caret--logo {
  margin-left: 4px;
}

.quick {
  display: flex;
  gap: 8px;
  margin-left: 10px;
}

.undo {
  margin-left: 8px;
}

.caret--q1 {
  margin-left: 6px;
}

.redo {
  margin-left: 8px;
}

.caret--q2 {
  margin-left: 6px;
}

.custom {
  margin-left: 8px;
}

.share {
  margin-left: 9px;
}

.share-text {
  margin-left: 4px;
  color: #7ec8f2;
}

.app-title {
  display: flex;
  gap: 17px;
  margin-left: 338px;
  font-size: 12.6px;
  color: #f0f0f0;
}

.tri {
  margin-left: 338px;
  border-left: 4px solid #d5d5d5;
  border-top: 4px solid transparent;
  border-bottom: 4px solid transparent;
}

.search {
  width: 178px;
  height: 20px;
  margin-left: 4px;
  padding-left: 3px;
  box-sizing: border-box;
  background: #434c5c;
  color: #a0a6af;
  font-style: italic;
  line-height: 20px;
}

.mag {
  margin-left: 5px;
}

.user {
  margin-left: 8px;
}

.login {
  margin-left: 5px;
}

.caret--login {
  margin-left: 59px;
}

.cart {
  margin-left: 12px;
}

.adsk {
  margin-left: 8px;
}

.caret--adsk {
  margin-left: 4px;
}

.vsep {
  width: 1px;
  height: 18px;
  margin-left: 9px;
  background: #5b6472;
}

.help {
  width: 16px;
  height: 16px;
  margin-left: 10px;
  border-radius: 50%;
  background: #d9d9d9;
  color: #3b4453;
  font: 700 12px/16px "Liberation Sans", sans-serif;
  text-align: center;
}

.caret--help {
  margin-left: 6px;
}

.winctl {
  display: flex;
  align-items: center;
  margin-left: 82px;
  gap: 35px;
}

/* ribbon tabs */
.tabs {
  height: 20px;
  flex: none;
  display: flex;
  align-items: stretch;
  padding-left: 4px;
}

.tab {
  padding: 0 10px;
  line-height: 21px;
  color: #bcc2ca;
}

.tab--on {
  background: #3b4453;
  color: #fff;
  padding: 0 9px;
  margin-right: 1px;
}

.tab--latin {
  letter-spacing: 0.35px;
}

.tab--ctx {
  width: 42px;
  box-sizing: border-box;
  margin-left: 1px;
  padding: 0;
  text-align: center;
  color: #f0f0f0;
  background: #0b6a9c;
  border: 1px solid #1899d0;
  border-bottom: 0;
  line-height: 20px;
}

.view-switch {
  width: 15px;
  height: 8px;
  margin: 7px 0 0 22px;
  background: #eee;
  position: relative;
}

.view-switch i {
  position: absolute;
  left: 5px;
  top: 2px;
  border-bottom: 3px solid #444;
  border-left: 3px solid transparent;
  border-right: 3px solid transparent;
}

.caret--view {
  margin: 9px 0 0 3px;
}

/* ribbon */
.ribbon {
  height: 99px;
  flex: none;
  display: flex;
  background: #3b4453;
}

.panel {
  flex: none;
  box-sizing: border-box;
  border-right: 1.5px solid #252c37;
  display: flex;
  flex-direction: column;
  margin: 1px 0;
}

.p-draw { width: 211px; }
.p-modify { width: 228px; }
.p-annot { width: 156px; }
.p-layer { width: 251px; }
.p-block { width: 172px; }
.p-props { width: 244px; }
.p-group { width: 68px; }
.p-util { width: 76.5px; }
.p-clip { width: 87px; }
.p-view { flex: 1; border-right: 0; }

.body {
  height: 79px;
  flex: none;
  box-sizing: border-box;
  display: flex;
  padding-top: 5px;
}

.p-draw .body { padding-left: 3px; }
.p-annot .body { padding-left: 5px; }
.p-layer .body { padding-left: 1px; }
.p-block .body { padding-left: 4px; }
.p-props .body { padding-left: 2px; }
.p-group .body { padding-left: 4px; }
.p-util .body { padding-left: 6px; }
.p-clip .body { padding-left: 6px; }
.p-view .body { padding-left: 11px; }

.big {
  flex: none;
  display: flex;
  flex-direction: column;
  align-items: center;
  padding-top: 2px;
  text-align: center;
}

.big > span {
  margin-top: 4px;
  white-space: nowrap;
}

.big > .caret {
  margin-top: 2px;
}

.big.two > span {
  margin-top: 3px;
  line-height: 17px;
}

.big--36 { width: 36px; }
.big--38 { width: 38px; }
.big--40 { width: 40px; }
.big--42 { width: 42px; }
.big--46 { width: 46px; }

.big-a {
  height: 32px;
  font: 400 43px/32px "Liberation Sans", sans-serif;
  color: #d9d9d9;
}

.col {
  display: flex;
  flex-direction: column;
}

.row {
  height: 24px;
  display: flex;
  align-items: center;
  gap: 5px;
  white-space: nowrap;
}

.col--draw { margin-left: 4px; }
.col--annot { margin-left: 4px; }
.col--block { margin-left: 6px; }
.col--pi { margin-left: 2px; }
.col--pc { margin-left: 1px; }
.col--group { margin-left: 3px; }
.col--util { margin-left: 8px; }
.col--clip { margin-left: 8px; }

.caret--r { margin-left: 1px; }
.caret--s { margin-left: 5px; }
.caret--t { margin-left: 6px; }
.caret--a { margin-left: 2px; }
.caret--e { margin-left: 5px; }
.caret--c { margin-left: 1px; }

.grid-modify {
  display: grid;
  grid-template-columns: 59px 60px 74px auto;
  grid-auto-rows: 24px;
  padding-left: 8px;
}

.row--l {
  gap: 7px;
  margin-left: 4px;
}

.row--l > span {
  margin-left: -2px;
}

.combo {
  height: 21px;
  box-sizing: border-box;
  display: flex;
  align-items: center;
  background: #4a5568;
  border: 1px solid #2a303b;
  position: relative;
}

.combo--layer {
  width: 207px;
  padding-left: 4px;
  gap: 2px;
}

.combo--layer > span {
  margin-left: -3px;
}

.combo--prop {
  width: 180px;
  padding-left: 6px;
}

.swatch {
  width: 16px;
  height: 15px;
  box-sizing: border-box;
  background: #000;
  border: 1px solid #ddd;
  margin-right: 4px;
}

.swatch--s {
  margin-left: 1px;
}

.lsample {
  width: 63px;
  height: 1px;
  background: #f0f0f0;
  margin-right: 3px;
}

.caret--combo {
  position: absolute;
  right: 3px;
  top: 7px;
}

.row--sel {
  width: 24px;
  height: 22px;
  margin: 0 0 0 -4px;
  justify-content: center;
  box-sizing: border-box;
  border: 1px solid #6ab7ee;
  background: #3f4a5b;
}

.ptitle {
  height: 19px;
  display: flex;
  align-items: center;
  justify-content: center;
  gap: 7px;
  color: #e8eaed;
}

.ptitle--launch {
  padding-right: 12px;
  position: relative;
}

.ptitle--launch .launch {
  position: absolute;
  right: 6px;
  top: 8px;
}

.ptitle--left {
  justify-content: flex-start;
  padding-left: 6px;
}

.ptitle--left .launch {
  margin-left: 4px;
}

/* document tabs */
.doctabs {
  height: 27px;
  flex: none;
  display: flex;
  align-items: flex-end;
  padding-left: 15px;
}

.doctabs > .ic {
  margin-bottom: 5px;
}

.burger {
  margin-bottom: 5px;
}

.slash {
  width: 1px;
  height: 14px;
  margin: 0 10px 6px 15px;
  background: #5b6472;
  transform: skewX(-20deg);
}

.doc-plain {
  margin-bottom: 4px;
  color: #dfe2e6;
}

.doc-on {
  height: 24px;
  display: flex;
  align-items: center;
  gap: 9px;
  box-sizing: border-box;
  margin: 0 9px 0 8px;
  padding-left: 16px;
  background: #3b4453;
  clip-path: polygon(8px 0, 100% 0, calc(100% - 8px) 100%, 0 100%);
  color: #fff;
  font-weight: 700;
}

.doc-on b {
  font-weight: 700;
  font-size: 12.4px;
  white-space: nowrap;
}

.doc-on--file {
  width: 110px;
}

.doc-on--file + .ic {
  margin-bottom: 5px;
}

.doc-on--layout {
  width: 97px;
  margin-right: 9px;
}

.strip {
  height: 4px;
  flex: none;
  background: #3b4453;
}

/* drawing area */
.canvas {
  flex: 1;
  position: relative;
  background: #fff;
  overflow: hidden;
}

.sheet {
  display: block;
}

.paper {
  fill: #fff;
  filter: drop-shadow(0 0 4px rgba(0, 0, 0, 0.25));
}

.zone text {
  font: 11.5px "Liberation Sans", sans-serif;
  fill: #222;
}

.vp-ctl {
  position: absolute;
  top: 10px;
  right: 10px;
  display: flex;
  gap: 8px;
}

.navbar {
  position: absolute;
  top: 26px;
  right: 3px;
  width: 34px;
  height: 135px;
  box-sizing: border-box;
  border: 2px solid #cfcfcf;
  border-radius: 5px;
  background: #f4f4f4;
}

.navbar .ic {
  margin: 0 0 0 1px;
}

.navbar__head {
  height: 11px;
  background: #cfcfcf;
  position: relative;
}

.navbar__head i {
  position: absolute;
  right: 1px;
  top: 1px;
  width: 8px;
  height: 8px;
  border-radius: 50%;
  background: #e8e8e8;
  color: #999;
  font: 8px/8px "Liberation Sans", sans-serif;
  text-align: center;
}

.edge-tab {
  position: absolute;
  right: 0;
  top: 626px;
  width: 10px;
  height: 59px;
  box-sizing: border-box;
  padding: 7px 0 0 4px;
  background: #4a5260;
  border-radius: 3px 0 0 3px;
  display: flex;
  flex-direction: column;
  gap: 1.5px;
}

.edge-tab i {
  display: block;
  height: 1.4px;
}

.edge-tab__off {
  background: #232933;
}

.edge-tab__on {
  background: #7fe0b8;
}

.cmd {
  position: absolute;
  left: 387px;
  bottom: 0;
  width: 1145px;
  height: 27px;
  display: flex;
}

.cmd__tools {
  width: 58px;
  flex: none;
  display: flex;
  align-items: center;
  gap: 6px;
  box-sizing: border-box;
  padding-left: 4px;
  background: #6a727e;
  border-radius: 4px 0 0 0;
}

.cmd__input {
  flex: 1;
  display: flex;
  align-items: center;
  box-sizing: border-box;
  padding: 0 0 2px 4px;
  background: #fff;
  border: 1px solid #6f6f6f;
  border-left: 0;
  border-radius: 0 3px 0 0;
  position: relative;
}

.caret--cmd {
  margin-left: 2px;
  border-top-color: #777;
}

.cmd__input span {
  margin-left: 8px;
  color: #a0a0a0;
  font-style: italic;
  font-size: 13px;
}

.caret-up {
  position: absolute;
  right: 3px;
  top: 10px;
  border-bottom: 5px solid #a0a0a0;
  border-left: 4px solid transparent;
  border-right: 4px solid transparent;
}

/* status bar */
.statusbar {
  flex: none;
  height: 33px;
}

.status-row {
  height: 29px;
  display: flex;
  align-items: flex-start;
  padding-left: 15px;
  position: relative;
}

.status-row > .ic,
.status-row > .burger {
  margin: 4px 0 0;
}

.status-row .slash {
  margin: 6px 10px 0 15px;
}

.status-row .doc-plain {
  margin: 4px 0 0;
}

.status-row > .doc-on {
  margin: 0 9px 0 7px;
}

.sbtns {
  position: absolute;
  top: 2px;
  right: 2px;
  display: flex;
  gap: 3px;
}

.sgroup {
  height: 24px;
  box-sizing: border-box;
  display: flex;
  align-items: center;
  background: #3b4453;
}

.sgroup--paper {
  width: 30px;
  justify-content: center;
}

.sgroup--a {
  width: 169px;
  padding-left: 4px;
}

.sgroup--a .caret--st {
  margin: 0 6px;
}

.sb-on {
  width: 22px;
  height: 24px;
  margin-left: 1px;
  display: flex;
  align-items: center;
  justify-content: center;
  background: #5b8bc0;
}

.sb-on--polar {
  margin-left: 5px;
}

.sb-on--gap {
  margin-left: 2px;
}

.osnap {
  margin-left: 4px;
}

.sgroup--b {
  width: 72px;
  justify-content: space-around;
}

.sgroup--c {
  width: 37px;
  padding-left: 4px;
  gap: 9px;
}

.sgroup--d {
  width: 24px;
  justify-content: center;
}

.sgroup--d .ic {
  margin: 0;
}

.watermark {
  position: absolute;
  right: 17px;
  top: 3px;
  color: rgba(205, 210, 216, 0.72);
  font: 13.5px/18px "Liberation Sans", "Noto Sans CJK SC", sans-serif;
  white-space: nowrap;
}
</style>
